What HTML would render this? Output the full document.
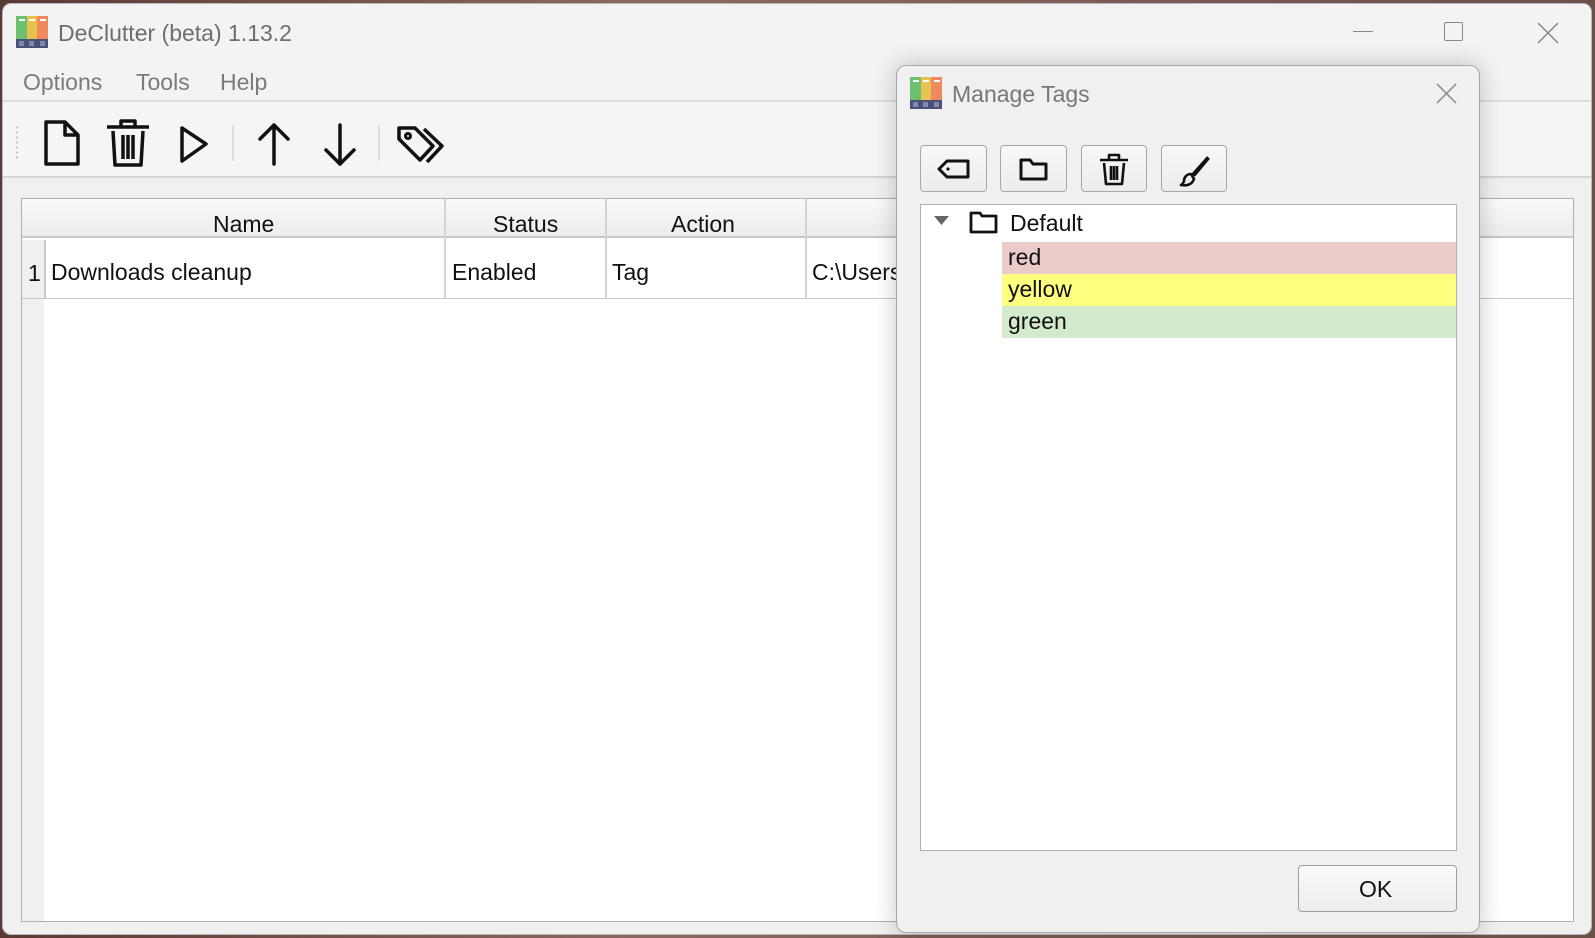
<!DOCTYPE html>
<html><head><meta charset="utf-8">
<style>
*{margin:0;padding:0;box-sizing:border-box}
body{width:1595px;height:938px;overflow:hidden;background:linear-gradient(90deg,#5a3a32,#8a6a60 40%,#6a5048);font-family:"Liberation Sans",sans-serif;position:relative}
.abs{position:absolute}
#win{left:2px;top:3px;width:1590px;height:932px;background:#f0f0f0;border-radius:9px;overflow:hidden;border:1px solid #b8b8b8}
.t{position:absolute;white-space:nowrap;font-size:23px}
svg{position:absolute;overflow:visible}
</style></head><body>
<div id="win" class="abs">
  <div class="abs" style="left:0;top:0;width:1590px;height:97px;background:#f3f3f3"></div>
  <div class="abs" style="left:13px;top:12px;width:32px;height:32px">
    <div class="abs" style="left:0;top:0;width:11px;height:23px;background:#6cc070"></div>
    <div class="abs" style="left:11px;top:0;width:10px;height:23px;background:#e8c24e"></div>
    <div class="abs" style="left:21px;top:0;width:11px;height:23px;background:#f08a5c"></div>
    <div class="abs" style="left:0;top:23px;width:32px;height:9px;background:#4a5078"></div>
    <div class="abs" style="left:3px;top:25px;width:5px;height:5px;background:#8088b0"></div>
    <div class="abs" style="left:13px;top:25px;width:5px;height:5px;background:#8088b0"></div>
    <div class="abs" style="left:24px;top:25px;width:5px;height:5px;background:#8088b0"></div>
    <div class="abs" style="left:3px;top:3px;width:6px;height:2px;background:#fff"></div>
    <div class="abs" style="left:13px;top:3px;width:6px;height:2px;background:#fff"></div>
    <div class="abs" style="left:24px;top:3px;width:6px;height:2px;background:#fff"></div>
  </div>
  <div class="t" style="left:55px;top:16px;color:#6e6e6e">DeClutter (beta) 1.13.2</div>
  <div class="abs" style="left:1350px;top:27px;width:20px;height:1px;background:#888"></div>
  <div class="abs" style="left:1441px;top:18px;width:19px;height:19px;border:1.5px solid #888;border-radius:2px"></div>
  <svg style="left:1535px;top:19px" width="20" height="20"><path d="M0 0L20 20M20 0L0 20" stroke="#888" stroke-width="1.5"/></svg>
  <div class="t" style="left:20px;top:65px;color:#7a7a7a">Options</div>
  <div class="t" style="left:133px;top:65px;color:#7a7a7a">Tools</div>
  <div class="t" style="left:217px;top:65px;color:#7a7a7a">Help</div>
  <div class="abs" style="left:0;top:96px;width:1590px;height:2px;background:#dcdcdc"></div>
  <div class="abs" style="left:0;top:98px;width:1590px;height:75px;background:#f5f5f5"></div>
  <div class="abs" style="left:0;top:172px;width:1590px;height:2px;background:#d4d4d4"></div>
  <div class="abs" style="left:11px;top:121px;width:8px;height:34px;background-image:radial-gradient(#bbb 1px,transparent 1.2px);background-size:6px 5px"></div>
  <svg style="left:40px;top:115px" width="40" height="50"><path d="M3 3H22L35 16V45H3Z M22 3V16H35" fill="none" stroke="#111" stroke-width="3.5" stroke-linejoin="round"/></svg>
  <svg style="left:102px;top:114px" width="46" height="50"><path d="M2 9H44M16 9V3H30V9M8 13L10 47H36L38 13M18 17V41M23 17V41M28 17V41" fill="none" stroke="#111" stroke-width="3.5" stroke-linejoin="round"/></svg>
  <svg style="left:176px;top:121px" width="32" height="40"><path d="M3 3L27 19L3 36Z" fill="none" stroke="#111" stroke-width="3.5" stroke-linejoin="round"/></svg>
  <div class="abs" style="left:229px;top:121px;width:2px;height:36px;background:#ddd"></div>
  <svg style="left:254px;top:118px" width="34" height="44"><path d="M17 42V3M3 17L17 3L31 17" fill="none" stroke="#111" stroke-width="3.5" stroke-linecap="round" stroke-linejoin="round"/></svg>
  <svg style="left:320px;top:118px" width="34" height="44"><path d="M17 3V42M3 28L17 42L31 28" fill="none" stroke="#111" stroke-width="3.5" stroke-linecap="round" stroke-linejoin="round"/></svg>
  <div class="abs" style="left:375px;top:121px;width:2px;height:36px;background:#ddd"></div>
  <svg style="left:393px;top:120px" width="52" height="42"><path d="M3 4H19L37 22L24 36L3 15Z" fill="none" stroke="#111" stroke-width="3.5" stroke-linejoin="round"/><circle cx="12" cy="12" r="2.5" fill="none" stroke="#111" stroke-width="3"/><path d="M28 5L46 22L31 38" fill="none" stroke="#111" stroke-width="3.5" stroke-linejoin="round"/></svg>
  <div class="abs" style="left:18px;top:194px;width:1553px;height:724px;background:#fff;border:1px solid #b0b0b0"></div>
  <div class="abs" style="left:19px;top:195px;width:1551px;height:39px;background:linear-gradient(#fafafa,#ececec);border-bottom:2px solid #c8c8c8"></div>
  <div class="abs" style="left:19px;top:236px;width:22px;height:681px;background:#f0f0f0"></div>
  <div class="abs" style="left:19px;top:294px;width:1551px;height:1px;background:#c8c8c8"></div>
  <div class="abs" style="left:41px;top:236px;width:2px;height:59px;background:#c8c8c8"></div>
  <div class="abs" style="left:441px;top:195px;width:2px;height:100px;background:#d4d4d4"></div>
  <div class="abs" style="left:602px;top:195px;width:2px;height:100px;background:#d4d4d4"></div>
  <div class="abs" style="left:802px;top:195px;width:2px;height:100px;background:#d4d4d4"></div>
  <div class="t" style="left:210px;top:207px;color:#111">Name</div>
  <div class="t" style="left:490px;top:207px;color:#111">Status</div>
  <div class="t" style="left:668px;top:207px;color:#111">Action</div>
  <div class="t" style="left:25px;top:256px;color:#111">1</div>
  <div class="t" style="left:48px;top:255px;color:#111">Downloads cleanup</div>
  <div class="t" style="left:449px;top:255px;color:#111">Enabled</div>
  <div class="t" style="left:609px;top:255px;color:#111">Tag</div>
  <div class="t" style="left:809px;top:255px;color:#111">C:\Users</div>
</div>
<div class="abs" style="left:896px;top:65px;width:584px;height:868px;background:#f0f0f0;border:1px solid #a8a8a8;border-radius:10px;box-shadow:0 0 24px rgba(0,0,0,.22)">
  <div class="abs" style="left:13px;top:11px;width:32px;height:32px">
    <div class="abs" style="left:0;top:0;width:11px;height:23px;background:#6cc070"></div>
    <div class="abs" style="left:11px;top:0;width:10px;height:23px;background:#e8c24e"></div>
    <div class="abs" style="left:21px;top:0;width:11px;height:23px;background:#f08a5c"></div>
    <div class="abs" style="left:0;top:23px;width:32px;height:9px;background:#4a5078"></div>
    <div class="abs" style="left:3px;top:25px;width:5px;height:5px;background:#8088b0"></div>
    <div class="abs" style="left:13px;top:25px;width:5px;height:5px;background:#8088b0"></div>
    <div class="abs" style="left:24px;top:25px;width:5px;height:5px;background:#8088b0"></div>
    <div class="abs" style="left:3px;top:3px;width:6px;height:2px;background:#fff"></div>
    <div class="abs" style="left:13px;top:3px;width:6px;height:2px;background:#fff"></div>
    <div class="abs" style="left:24px;top:3px;width:6px;height:2px;background:#fff"></div>
  </div>
  <div class="t" style="left:55px;top:15px;color:#777">Manage Tags</div>
  <svg style="left:540px;top:18px" width="20" height="20"><path d="M0 0L19 19M19 0L0 19" stroke="#888" stroke-width="1.5"/></svg>
  <div class="abs" style="left:23px;top:79px;width:67px;height:47px;border:1px solid #a8a8a8;border-radius:4px;background:linear-gradient(#f8f8f8,#ececec)"></div>
  <div class="abs" style="left:103px;top:79px;width:67px;height:47px;border:1px solid #a8a8a8;border-radius:4px;background:linear-gradient(#f8f8f8,#ececec)"></div>
  <div class="abs" style="left:184px;top:79px;width:66px;height:47px;border:1px solid #a8a8a8;border-radius:4px;background:linear-gradient(#f8f8f8,#ececec)"></div>
  <div class="abs" style="left:264px;top:79px;width:66px;height:47px;border:1px solid #a8a8a8;border-radius:4px;background:linear-gradient(#f8f8f8,#ececec)"></div>
  <svg style="left:40px;top:92px" width="34" height="22"><path d="M10 3H31V19H10L2 11Z" fill="none" stroke="#111" stroke-width="3" stroke-linejoin="round"/><circle cx="11" cy="11" r="1.6" fill="#111"/></svg>
  <svg style="left:122px;top:92px" width="30" height="24"><path d="M2 2H11L14 6H27V21H2Z" fill="none" stroke="#111" stroke-width="3" stroke-linejoin="round"/></svg>
  <svg style="left:201px;top:87px" width="32" height="34"><path d="M2 7H30M11 7V2H21V7M6 10L8 31H24L26 10M13 13V27M16 13V27M19 13V27" fill="none" stroke="#111" stroke-width="2.6" stroke-linejoin="round"/></svg>
  <svg style="left:281px;top:88px" width="34" height="34"><path d="M30 3L14 21M31 4L16 22" stroke="#111" stroke-width="2.5" fill="none"/><path d="M13 20C8 20 6 24 6 27C5 30 3 31 3 31C8 32 14 31 16 25Z" fill="none" stroke="#111" stroke-width="2.6" stroke-linejoin="round"/></svg>
  <div class="abs" style="left:23px;top:138px;width:537px;height:647px;background:#fff;border:1px solid #b0b0b0"></div>
  <svg style="left:37px;top:150px" width="16" height="10"><path d="M0 0H15L7.5 9Z" fill="#666"/></svg>
  <svg style="left:72px;top:145px" width="30" height="24"><path d="M2 2H11L13 5H27V21H2Z" fill="none" stroke="#111" stroke-width="2.8" stroke-linejoin="round"/></svg>
  <div class="t" style="left:113px;top:144px;color:#111">Default</div>
  <div class="abs" style="left:105px;top:176px;width:454px;height:32px;background:#ebcaca"></div>
  <div class="abs" style="left:105px;top:208px;width:454px;height:32px;background:#ffff7f"></div>
  <div class="abs" style="left:105px;top:240px;width:454px;height:32px;background:#d3ebcc"></div>
  <div class="t" style="left:111px;top:178px;color:#111">red</div>
  <div class="t" style="left:111px;top:210px;color:#111">yellow</div>
  <div class="t" style="left:111px;top:242px;color:#111">green</div>
  <div class="abs" style="left:401px;top:799px;width:159px;height:47px;border:1px solid #a0a0a0;border-radius:4px;background:linear-gradient(#fbfbfb,#ececec)"></div>
  <div class="t" style="left:462px;top:810px;color:#111">OK</div>
</div>
</body></html>
